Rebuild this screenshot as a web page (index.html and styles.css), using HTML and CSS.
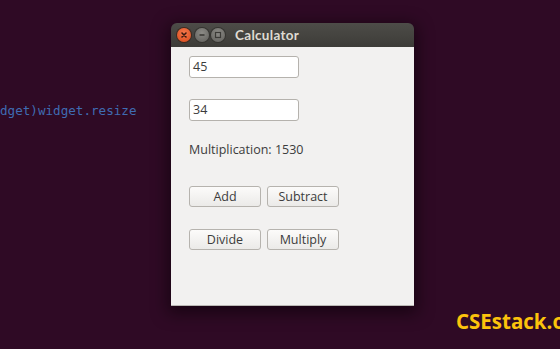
FILE: index.html
```html
<!DOCTYPE html>
<html>
<head>
<meta charset="utf-8">
<link rel="stylesheet" href="styles.css">
</head>
<body>
<div class="desktop">
  <pre class="terminal">dget)widget.resize</pre>
  <div class="window">
    <div class="titlebar">
      <div class="controls">
        <span class="ctl close"><svg width="14" height="14" viewBox="0 0 14 14"><path d="M5 5L9 9M9 5L5 9" stroke="#3a1a10" stroke-width="1.6" stroke-linecap="round"/></svg></span>
        <span class="ctl min"><svg width="14" height="14" viewBox="0 0 14 14"><path d="M4.5 7H9.5" stroke="#3b3a36" stroke-width="1.6"/></svg></span>
        <span class="ctl"><svg width="14" height="14" viewBox="0 0 14 14"><rect x="4.5" y="4.5" width="5" height="5" fill="none" stroke="#3b3a36" stroke-width="1.2"/></svg></span>
      </div>
      <span class="title">Calculator</span>
    </div>
    <div class="content">
      <div class="field">45</div>
      <div class="field">34</div>
      <div class="result">Multiplication: 1530</div>
      <div class="row">
        <button class="btn">Add</button>
        <button class="btn">Subtract</button>
      </div>
      <div class="row">
        <button class="btn">Divide</button>
        <button class="btn">Multiply</button>
      </div>
    </div>
  </div>
  <div class="watermark">CSEstack.org</div>
</div>
</body>
</html>
```
FILE: styles.css
```css
html, body {
  margin: 0;
  padding: 0;
}
body {
  background: #2f0a25;
  width: 560px;
  height: 349px;
  overflow: hidden;
}
.desktop {
  position: relative;
  width: 560px;
  height: 349px;
  background: #2f0a25;
  overflow: hidden;
}
.terminal {
  margin: 0;
  padding: 103px 0 0 0;
  font-family: "DejaVu Sans Mono", monospace;
  font-size: 12.6px;
  line-height: 16px;
  color: #3f6cb3;
}
.window {
  position: absolute;
  left: 171px;
  top: 23px;
  width: 243px;
  height: 283px;
  display: flex;
  flex-direction: column;
  border-radius: 6px 6px 0 0;
  box-shadow: 0 4px 16px 3px rgba(10, 0, 6, 0.6);
}
.titlebar {
  height: 24px;
  flex: 0 0 24px;
  display: flex;
  align-items: center;
  background: linear-gradient(#4d4c48, #3d3c38);
  border-radius: 6px 6px 0 0;
  box-sizing: border-box;
  padding-left: 6px;
}
.controls {
  display: flex;
  gap: 2px;
}
.ctl {
  width: 14px;
  height: 14px;
  border-radius: 50%;
  background: radial-gradient(circle at 50% 35%, #8c8b86, #5f5e5a);
  box-shadow: 0 0 0 1px #353430;
  display: flex;
}
.ctl.min {
  margin-left: 2px;
}
.ctl.close {
  background: radial-gradient(circle at 50% 35%, #f4774b, #db4a1a);
  box-shadow: 0 0 0 1px #3e2a20;
}
.title {
  margin-left: 10px;
  font-family: "Lato", "DejaVu Sans", sans-serif;
  font-weight: bold;
  font-size: 13.5px;
  color: #dfdbd2;
  letter-spacing: 0.3px;
}
.content {
  flex: 1;
  background: #f2f1f0;
  padding: 9px 0 0 18px;
  display: flex;
  flex-direction: column;
  align-items: flex-start;
  border-bottom: 1px solid #bbb9b5;
}
.field {
  box-sizing: border-box;
  width: 110px;
  height: 22px;
  border: 1px solid #b5b2ad;
  border-radius: 3px;
  background: #ffffff;
  font-family: "Open Sans", "DejaVu Sans", sans-serif;
  font-size: 12.5px;
  line-height: 20px;
  color: #3c3c3c;
  padding-left: 3px;
  margin-bottom: 21px;
}
.result {
  font-family: "Open Sans", "DejaVu Sans", sans-serif;
  font-size: 12.5px;
  color: #3c3c3c;
  line-height: 16px;
  margin-top: 0;
  margin-bottom: 28px;
}
.row {
  display: flex;
  gap: 6px;
  margin-bottom: 22px;
}
.btn {
  box-sizing: border-box;
  width: 72px;
  height: 21px;
  border: 1px solid #b6b3ae;
  border-radius: 3px;
  background: linear-gradient(#fcfbfa, #ebeae8);
  font-family: "Open Sans", "DejaVu Sans", sans-serif;
  font-size: 12.5px;
  color: #3c3c3c;
  padding: 0;
  line-height: 19px;
}
.watermark {
  position: absolute;
  left: 456px;
  top: 307px;
  font-family: "Open Sans", "DejaVu Sans", sans-serif;
  font-weight: bold;
  font-size: 20.5px;
  color: #fcc30c;
  white-space: nowrap;
}
```
